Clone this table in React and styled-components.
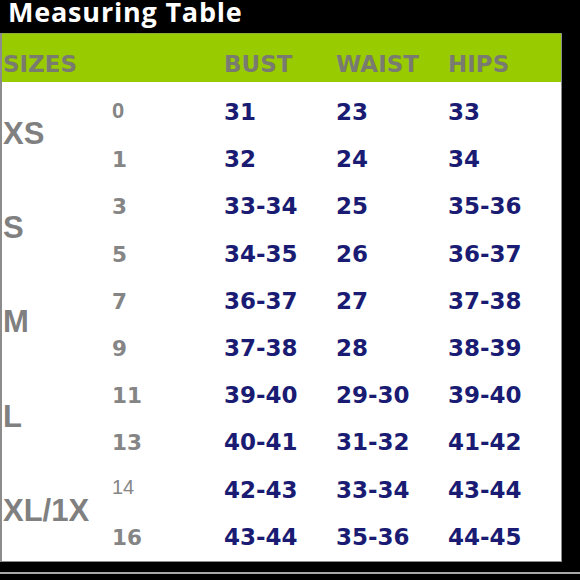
import React from "react";
import styled, { createGlobalStyle } from "styled-components";

const GlobalStyle = createGlobalStyle`
  html, body {
    margin: 0;
    padding: 0;
    background: #000;
  }
`;

const Page = styled.div`
  width: 580px;
  height: 580px;
  background: #000;
  overflow: hidden;
  display: flex;
  flex-direction: column;
`;

const TitleBar = styled.div`
  height: 33px;
  padding-left: 8px;
  display: flex;
  align-items: flex-start;
`;

const Title = styled.h1`
  margin: 0;
  color: #fff;
  font-family: "Open Sans", "Noto Sans", sans-serif;
  font-weight: 700;
  font-size: 27px;
  line-height: 23px;
  letter-spacing: 0.8px;
`;

const Panel = styled.div`
  width: 559px;
  border: 1px solid #8c8c8c;
  border-left-width: 2px;
  border-top: none;
  background: #fff;
`;

const Header = styled.div`
  height: 49px;
  background: #99cc00;
  border-top: 1px solid #8fae3a;
  display: grid;
  grid-template-columns: 110px 112px 112px 112px 1fr;
  align-items: end;
  padding-bottom: 6px;
  box-sizing: border-box;
`;

const HeadCell = styled.div`
  font-family: "DejaVu Sans", Verdana, sans-serif;
  font-weight: 700;
  font-size: 23px;
  line-height: 23px;
  color: #7a7b70;
  padding-left: ${({ first }) => (first ? "1px" : "0")};
`;

const Body = styled.div`
  display: grid;
  grid-template-columns: 110px 112px 112px 112px 1fr;
  grid-auto-rows: 47.2px;
  padding-top: 7px;
  align-items: center;
`;

const SizeLabel = styled.div`
  grid-row: span 2;
  align-self: center;
  margin-bottom: 6px;
  padding-left: 1px;
  font-family: "Liberation Sans", Arial, sans-serif;
  font-weight: 700;
  font-size: 31px;
  line-height: 31px;
  color: #808080;
`;

const SizeNum = styled.div`
  font-family: ${({ alt }) =>
    alt ? '"Liberation Sans", Arial, sans-serif' : '"DejaVu Sans", Verdana, sans-serif'};
  font-weight: ${({ alt }) => (alt === "light" ? 400 : 700)};
  font-size: ${({ alt }) =>
    alt === "light" ? "20px" : alt === "bold" ? "22px" : "21.5px"};
  line-height: 21px;
  color: #858585;
  margin-bottom: ${({ alt }) => (alt === "light" ? "5px" : alt === "bold" ? "4px" : "0")};
`;

const Value = styled.div`
  font-family: "DejaVu Sans", Verdana, sans-serif;
  font-weight: 700;
  font-size: 23px;
  line-height: 23px;
  color: #1a1b72;
`;

const Footer = styled.div`
  height: 10px;
  border-bottom: 2px solid #a8a8a8;
`;

const groups = [
  {
    label: "XS",
    rows: [
      { size: "0", alt: "bold", bust: "31", waist: "23", hips: "33" },
      { size: "1", bust: "32", waist: "24", hips: "34" },
    ],
  },
  {
    label: "S",
    rows: [
      { size: "3", bust: "33-34", waist: "25", hips: "35-36" },
      { size: "5", bust: "34-35", waist: "26", hips: "36-37" },
    ],
  },
  {
    label: "M",
    rows: [
      { size: "7", bust: "36-37", waist: "27", hips: "37-38" },
      { size: "9", bust: "37-38", waist: "28", hips: "38-39" },
    ],
  },
  {
    label: "L",
    rows: [
      { size: "11", bust: "39-40", waist: "29-30", hips: "39-40" },
      { size: "13", bust: "40-41", waist: "31-32", hips: "41-42" },
    ],
  },
  {
    label: "XL/1X",
    rows: [
      { size: "14", alt: "light", bust: "42-43", waist: "33-34", hips: "43-44" },
      { size: "16", bust: "43-44", waist: "35-36", hips: "44-45" },
    ],
  },
];

const App = () => {
  return (
    <Page>
      <GlobalStyle />
      <TitleBar>
        <Title>Measuring Table</Title>
      </TitleBar>
      <Panel>
        <Header>
          <HeadCell first>SIZES</HeadCell>
          <HeadCell />
          <HeadCell>BUST</HeadCell>
          <HeadCell>WAIST</HeadCell>
          <HeadCell>HIPS</HeadCell>
        </Header>
        <Body>
          {groups.map((g) => (
            <React.Fragment key={g.label}>
              <SizeLabel>{g.label}</SizeLabel>
              {g.rows.map((r) => (
                <React.Fragment key={r.size}>
                  <SizeNum alt={r.alt}>{r.size}</SizeNum>
                  <Value>{r.bust}</Value>
                  <Value>{r.waist}</Value>
                  <Value>{r.hips}</Value>
                </React.Fragment>
              ))}
            </React.Fragment>
          ))}
        </Body>
      </Panel>
      <Footer />
    </Page>
  );
};

export default App;
